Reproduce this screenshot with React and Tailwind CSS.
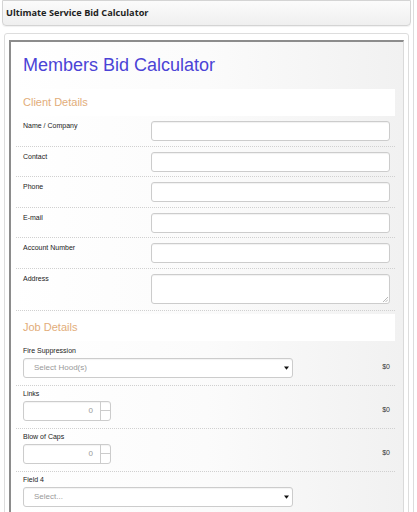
import React from "react";

const clientRows = [
  { label: "Name / Company" },
  { label: "Contact" },
  { label: "Phone" },
  { label: "E-mail" },
  { label: "Account Number" },
];

function Caret() {
  return (
    <svg width="5" height="4" viewBox="0 0 5 4" className="shrink-0">
      <path d="M0 0.5h5L2.5 3.8z" fill="#111" />
    </svg>
  );
}

function SectionBand({ title, className = "" }) {
  return (
    <div className={`flex h-[27px] items-center bg-white pl-[7px] ${className}`}>
      <h3 className="text-[11px] font-normal text-[#e2ad7a]">{title}</h3>
    </div>
  );
}

function TextRow({ label }) {
  return (
    <div className="flex items-start border-b border-dotted border-[#d0d0d0] pb-[4.5px] pl-[7px] pr-[5px] pt-[5px]">
      <label className="w-[128px] shrink-0 text-[7px] leading-[10px] text-[#222]">{label}</label>
      <div className="h-[20px] flex-1 rounded-[3px] border border-[#cccccc] bg-white shadow-[inset_0_1px_1px_rgba(0,0,0,0.06)]" />
    </div>
  );
}

function SelectBox({ placeholder }) {
  return (
    <div className="flex h-[20px] w-[270px] items-center justify-between rounded-[3px] border border-[#cccccc] bg-white pl-[10px] pr-[3px] shadow-[inset_0_1px_1px_rgba(0,0,0,0.05)]">
      <span className="text-[8px] text-[#999]">{placeholder}</span>
      <Caret />
    </div>
  );
}

function NumberBox() {
  return (
    <div className="flex h-[20px] w-[88px] rounded-[3px] border border-[#cccccc] bg-white shadow-[inset_0_1px_1px_rgba(0,0,0,0.05)]">
      <div className="flex flex-1 items-center justify-end pr-[7px] text-[8px] text-[#999]">0</div>
      <div className="flex w-[10px] flex-col border-l border-[#cccccc]">
        <div className="flex-1 border-b border-[#cccccc]" />
        <div className="flex-1" />
      </div>
    </div>
  );
}

function JobRow({ label, children, last = false }) {
  return (
    <div
      className={`pb-[7px] pl-[7px] pr-[5px] pt-[3px] ${
        last ? "" : "border-b border-dotted border-[#d0d0d0]"
      }`}
    >
      <div className="mb-[2px] text-[7px] leading-[10px] text-[#222]">{label}</div>
      <div className="flex items-center justify-between">
        {children}
        {!last && <span className="text-[7px] text-[#333]">$0</span>}
      </div>
    </div>
  );
}

export default function App() {
  return (
    <div className="h-[512px] w-[417px] overflow-hidden bg-white font-['Liberation_Sans',Arial,sans-serif]">
      <div className="h-full w-[414px] border-r border-[#dcdcdc]">
        {/* top title bar */}
        <div className="mx-[2px] flex h-[26px] items-center rounded-b-[4px] border border-[#d4d4d4] bg-gradient-to-b from-[#fbfbfb] to-[#efefef] pl-[3px] shadow-[0_1px_1px_rgba(0,0,0,0.06)]">
          <span className="font-['Open_Sans',sans-serif] text-[9.2px] font-bold text-[#1f1f1f]">
            Ultimate Service Bid Calculator
          </span>
        </div>

        <div className="mx-[4px] mt-[7px] h-[480px] rounded-t-[3px] border border-[#dddddd] bg-white px-[4px] pt-[6px]">
          <div className="h-full border-l-2 border-r border-t-2 border-l-[#8c8c8c] border-r-[#dadada] border-t-[#8c8c8c] bg-gradient-to-r from-white via-[#fbfbfb] to-[#f1f1f1]">
            <div className="ml-[5px] mr-[8px]">
              <h1 className="mt-[12px] pl-[7px] text-[18px] font-normal leading-[22px] text-[#4b43d6]">
                Members Bid Calculator
              </h1>

              <SectionBand title="Client Details" className="mt-[13px]" />
              {clientRows.map((r) => (
                <TextRow key={r.label} label={r.label} />
              ))}
              <div className="flex items-start border-b border-dotted border-[#d0d0d0] pb-[6px] pl-[7px] pr-[5px] pt-[5px]">
                <label className="w-[128px] shrink-0 text-[7px] leading-[10px] text-[#222]">Address</label>
                <div className="relative h-[30px] flex-1 rounded-[3px] border border-[#cccccc] bg-white shadow-[inset_0_1px_1px_rgba(0,0,0,0.06)]">
                  <svg width="5" height="5" viewBox="0 0 5 5" className="absolute bottom-[1px] right-[1px]">
                    <path d="M5 0L0 5M5 2.5L2.5 5" stroke="#999" strokeWidth="0.7" />
                  </svg>
                </div>
              </div>

              <SectionBand title="Job Details" className="mb-[2px] mt-[3px]" />
              <JobRow label="Fire Suppression">
                <SelectBox placeholder="Select Hood(s)" />
              </JobRow>
              <JobRow label="Links">
                <NumberBox />
              </JobRow>
              <JobRow label="Blow of Caps">
                <NumberBox />
              </JobRow>
              <JobRow label="Field 4" last>
                <SelectBox placeholder="Select..." />
              </JobRow>
            </div>
          </div>
        </div>
      </div>
    </div>
  );
}
